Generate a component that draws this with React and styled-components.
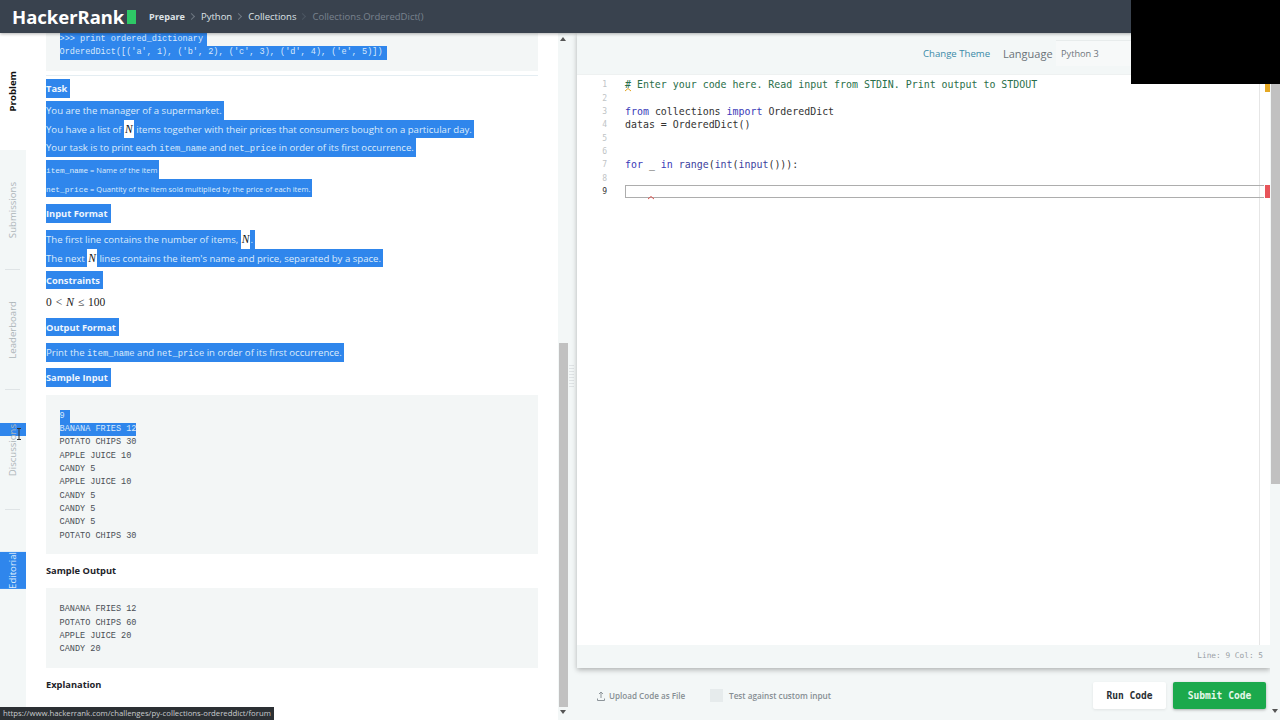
import React from 'react';
import styled, { createGlobalStyle } from 'styled-components';

const Global = createGlobalStyle`
  html, body {
    margin: 0;
    height: 720px;
    overflow: hidden;
    background: #fff;
    font-family: "Open Sans", "Liberation Sans", sans-serif;
    color: #39424e;
  }
  * { box-sizing: border-box; }
`;

const Page = styled.div`
  position: relative;
  width: 1280px;
  height: 720px;
  overflow: hidden;
`;

const Header = styled.header`
  position: relative;
  z-index: 3;
  height: 33px;
  display: flex;
  align-items: center;
  padding-left: 12px;
  background: #39424e;
  box-shadow: 0 1px 3px rgba(0, 0, 0, .3);
`;

const Logo = styled.div`
  display: flex;
  align-items: center;
  width: 137px;
  color: #fff;
  font-family: "Noto Sans", sans-serif;
  font-size: 18.5px;
  font-weight: 700;
`;

const LogoMark = styled.span`
  width: 9px;
  height: 14px;
  margin-left: 3px;
  background: #2ec866;
`;

const Crumb = styled.span`
  font-size: ${p => p.$bold ? 9.1 : 9.5}px;
  color: ${p => p.$dim ? '#79838e' : '#dfe3e6'};
  font-weight: ${p => p.$bold ? 700 : 400};
`;

const CrumbSep = styled.span`
  width: 5px;
  height: 5px;
  margin: 0 7px 0 4px;
  border-top: 1px solid ${p => p.$dim ? '#4c5662' : '#6d7680'};
  border-right: 1px solid ${p => p.$dim ? '#4c5662' : '#6d7680'};
  transform: rotate(45deg);
`;

const Main = styled.div`
  display: flex;
  height: 687px;
`;

const Rail = styled.nav`
  flex: 0 0 26px;
  background: #f3f7f7;
  box-shadow: 1px 0 1px rgba(0, 0, 0, .04);
`;

const Tab = styled.div`
  position: relative;
  height: ${p => p.$first ? 117 : 120}px;
  display: flex;
  align-items: center;
  justify-content: center;
  background: ${p => p.$first ? '#fff' : 'transparent'};
  &::after {
    content: ${p => p.$first || p.$last ? 'none' : '""'};
    position: absolute;
    left: 5px;
    right: 6px;
    bottom: 0;
    height: 1px;
    background: #dfe4e6;
  }
`;

const TabLabel = styled.span`
  position: relative;
  z-index: 1;
  width: 26px;
  text-align: center;
  writing-mode: vertical-rl;
  transform: rotate(180deg);
  font-size: 9.6px;
  line-height: 26px;
  font-weight: ${p => p.$active ? 700 : 400};
  color: ${p => p.$active ? '#111' : p.$selected ? '#dcebfb' : '#aeb6ba'};
  background: ${p => p.$selected ? '#2f86ec' : 'transparent'};
`;

const TabSelection = styled.span`
  position: absolute;
  top: 33px;
  left: 0;
  width: 26px;
  height: 13px;
  background: #2f86ec;
`;

const Problem = styled.section`
  flex: 0 0 532px;
  padding: 0 20px;
  overflow: hidden;
  background: #fff;
`;

const Block = styled.div`
  margin-bottom: ${p => p.$after || 0}px;
  padding: ${p => p.$cut ? 0 : 15}px 13.5px 11px;
  background: #f3f6f6;
`;

const CodeLine = styled.div`
  width: fit-content;
  height: 13.33px;
  min-width: ${p => p.$selected ? 10 : 0}px;
  padding-right: ${p => p.$pad || 0}px;
  font-family: "Liberation Mono", monospace;
  font-size: 8.55px;
  line-height: 13.33px;
  white-space: pre;
  color: ${p => p.$selected ? '#d8e8fb' : '#4a4f55'};
  background: ${p => p.$selected ? '#2f86ec' : 'transparent'};
`;

const Divider = styled.hr`
  height: 1px;
  margin: 4.33px 0 3.33px;
  border: 0;
  background: #e4edf2;
`;

const Heading = styled.h3`
  width: fit-content;
  height: 18.67px;
  margin: 0 0 ${p => p.$after || 0}px;
  padding-right: ${p => p.$selected ? 3 : 0}px;
  font-size: 9.3px;
  line-height: 20.5px;
  font-weight: 700;
  color: ${p => p.$selected ? '#eef5fd' : '#1d232a'};
  background: ${p => p.$selected ? '#2f86ec' : 'transparent'};
`;

const Para = styled.p`
  width: fit-content;
  height: 18.67px;
  margin: 0 0 ${p => p.$after || 0}px;
  padding-right: 2px;
  font-size: ${p => p.$small ? 7.5 : 9.6}px;
  line-height: 20.5px;
  white-space: nowrap;
  color: #dcebfb;
  background: #2f86ec;
`;

const Mono = styled.code`
  font-family: "Liberation Mono", monospace;
  font-size: ${p => p.$small ? 7.8 : 8.8}px;
  line-height: 1;
`;

const MathVar = styled.span`
  display: inline-block;
  height: 18.67px;
  padding: 0 1px;
  vertical-align: top;
  font-family: "Liberation Serif", serif;
  font-size: 11.5px;
  line-height: 18.67px;
  font-style: italic;
  color: #111;
  background: #fff;
`;

const MathLine = styled.p`
  height: 18.67px;
  margin: 0 0 6.67px;
  font-family: "Liberation Serif", serif;
  font-size: 11.5px;
  line-height: 18.67px;
  word-spacing: 1px;
  color: #222;
  em { font-size: 12px; }
`;

const ScrollTrack = styled.div`
  flex: 0 0 10px;
  display: flex;
  flex-direction: column;
  align-items: center;
  background: #f3f7f7;
`;

const Arrow = styled.span`
  flex: none;
  width: 0;
  height: 0;
  margin-top: ${p => p.$top || 0}px;
  border-left: 3px solid transparent;
  border-right: 3px solid transparent;
  ${p => p.$down ? 'border-top: 4px solid #555;' : 'border-bottom: 4px solid #555;'}
`;

const Thumb = styled.div`
  flex: none;
  width: 9px;
  height: ${p => p.$height}px;
  margin-top: ${p => p.$top}px;
  background: #c1c1c1;
`;

const Splitter = styled.div`
  flex: 0 0 9px;
  display: flex;
  align-items: center;
  justify-content: center;
  padding: 0 3px 0 1px;
  background: #f3f7f7;
`;

const Grip = styled.span`
  width: 5px;
  height: 22px;
  margin-top: -2px;
  background: repeating-linear-gradient(#dfe3e5 0 1px, transparent 1px 3px);
`;

const Workspace = styled.div`
  flex: 0 0 693px;
  display: flex;
  flex-direction: column;
  background: #f3f7f7;
`;

const Panel = styled.div`
  height: 635px;
  display: flex;
  flex-direction: column;
  background: #f3f7f7;
  box-shadow: 0 2px 5px rgba(0, 0, 0, .28);
`;

const PanelHead = styled.div`
  flex: 0 0 41px;
  display: flex;
  align-items: center;
  padding: 0 0 1px 346px;
`;

const ThemeLink = styled.a`
  width: 80px;
  font-size: 9.6px;
  color: #3a8aa8;
`;

const LangLabel = styled.span`
  width: 53px;
  font-size: 11px;
  color: #6b7379;
`;

const LangSelect = styled.div`
  width: 90px;
  height: 26px;
  display: flex;
  align-items: center;
  padding-left: 5px;
  font-size: 9.2px;
  color: #6f777d;
  background: #f7f9f9;
  border-top: 1px solid #e8ecec;
`;

const Editor = styled.div`
  flex: 0 0 571px;
  display: flex;
  background: #fff;
  border-top: 1px solid #eef1f1;
`;

const Lines = styled.div`
  flex: 1;
  padding-top: 3.4px;
`;

const Line = styled.div`
  display: flex;
  height: 13.33px;
  font-family: "DejaVu Sans Mono", monospace;
  font-size: 9.94px;
  line-height: 13.33px;
  white-space: pre;
`;

const LineNo = styled.span`
  flex: 0 0 30px;
  margin-right: 18px;
  text-align: right;
  font-size: 8px;
  color: ${p => p.$active ? '#333' : '#c0c4c6'};
`;

const CodeText = styled.span`
  position: relative;
  color: #333;
`;

const Kw = styled.span`
  color: ${p => p.$builtin ? '#3c3f9e' : '#3a3ab8'};
`;

const Comment = styled.span`
  color: #2a6f4a;
`;

const Squiggle = styled.svg`
  position: absolute;
  left: ${p => p.$left}px;
  top: ${p => p.$top}px;
  overflow: visible;
`;

const ActiveBox = styled.span`
  position: relative;
  z-index: 1;
  flex: 1;
  height: 13.33px;
  margin-right: -5px;
  border: 1px solid #adadad;
  border-right: 0;
`;

const Ruler = styled.div`
  position: relative;
  flex: 0 0 11px;
  border-left: 1px solid #e6e6e6;
`;

const RulerMark = styled.span`
  position: absolute;
  right: 0;
  top: ${p => p.$top}px;
  width: 5px;
  height: ${p => p.$height}px;
  background: ${p => p.$color};
`;

const StatusRow = styled.div`
  flex: 0 0 23px;
  display: flex;
  align-items: center;
  justify-content: flex-end;
  padding: 0 7px 2px 0;
  font-family: "DejaVu Sans Mono", monospace;
  font-size: 7.8px;
  color: #9aa1a5;
`;

const Toolbar = styled.div`
  flex: 1;
  display: flex;
  align-items: center;
  padding: 3px 4px 0 20px;
`;

const UploadLink = styled.a`
  display: flex;
  align-items: center;
  gap: 4px;
  width: 113px;
  font-size: 8.1px;
  font-weight: 600;
  color: #868e93;
`;

const Check = styled.span`
  flex: none;
  width: 13px;
  height: 13px;
  margin-right: 6px;
  background: #e6ebec;
`;

const CheckLabel = styled.span`
  font-size: 8.2px;
  font-weight: 600;
  color: #868e93;
`;

const Button = styled.button`
  width: ${p => p.$primary ? 93 : 73}px;
  height: 27px;
  margin-left: ${p => p.$primary ? '7px' : 'auto'};
  padding: 0;
  border: 0;
  border-radius: 2px;
  font-family: "DejaVu Sans Mono", monospace;
  font-size: 9.6px;
  font-weight: 700;
  color: ${p => p.$primary ? '#e4f7ea' : '#2a2f35'};
  background: ${p => p.$primary ? '#1ba94c' : '#fff'};
  box-shadow: 0 1px 3px rgba(0, 0, 0, ${p => p.$primary ? .3 : .08});
`;

const BlackBox = styled.div`
  position: absolute;
  z-index: 5;
  top: 0;
  right: 0;
  width: 149px;
  height: 84px;
  background: #000;
`;

const StatusTip = styled.div`
  position: absolute;
  z-index: 5;
  left: 0;
  bottom: 0;
  width: 274px;
  height: 13px;
  padding-left: 3px;
  font-size: 7.75px;
  line-height: 13px;
  white-space: nowrap;
  color: #c9ccce;
  background: #2c3034;
`;

const Cursor = styled.svg`
  position: absolute;
  z-index: 5;
  left: 16px;
  top: 428px;
`;

const intro = ['>>> print ordered_dictionary', "OrderedDict([('a', 1), ('b', 2), ('c', 3), ('d', 4), ('e', 5)])"];
const sampleIn = ['POTATO CHIPS 30', 'APPLE JUICE 10', 'CANDY 5', 'APPLE JUICE 10', 'CANDY 5', 'CANDY 5', 'CANDY 5', 'POTATO CHIPS 30'];
const sampleOut = ['BANANA FRIES 12', 'POTATO CHIPS 60', 'APPLE JUICE 20', 'CANDY 20'];

function Caret({ left, top, color }) {
  return (
    <Squiggle $left={left} $top={top} width="6" height="3" viewBox="0 0 6 3" fill="none" stroke={color} strokeWidth="1">
      <path d="M0 3l3-2.5L6 3" />
    </Squiggle>
  );
}

export default function App() {
  return (
    <Page>
      <Global />
      <Header>
        <Logo>HackerRank<LogoMark /></Logo>
        <Crumb $bold>Prepare</Crumb>
        <CrumbSep />
        <Crumb>Python</Crumb>
        <CrumbSep />
        <Crumb>Collections</Crumb>
        <CrumbSep $dim />
        <Crumb $dim>Collections.OrderedDict()</Crumb>
      </Header>
      <Main>
        <Rail>
          <Tab $first><TabLabel $active>Problem</TabLabel></Tab>
          <Tab><TabLabel>Submissions</TabLabel></Tab>
          <Tab><TabLabel>Leaderboard</TabLabel></Tab>
          <Tab><TabSelection /><TabLabel>Discussions</TabLabel></Tab>
          <Tab $last><TabLabel $selected>Editorial</TabLabel></Tab>
        </Rail>
        <Problem>
          <Block $cut>
            <CodeLine $selected $pad={4}>{intro[0]}</CodeLine>
            <CodeLine $selected $pad={4}>{intro[1]}</CodeLine>
          </Block>
          <Divider />
          <Heading $selected $after={3}>Task</Heading>
          <Para>You are the manager of a supermarket.</Para>
          <Para>You have a list of <MathVar>N</MathVar> items together with their prices that consumers bought on a particular day.</Para>
          <Para $after={3}>Your task is to print each <Mono>item_name</Mono> and <Mono>net_price</Mono> in order of its first occurrence.</Para>
          <Para $small><Mono $small>item_name</Mono> = Name of the item</Para>
          <Para $small $after={6.67}><Mono $small>net_price</Mono> = Quantity of the item sold multiplied by the price of each item.</Para>
          <Heading $selected $after={7.33}>Input Format</Heading>
          <Para>The first line contains the number of items, <MathVar>N</MathVar>.</Para>
          <Para $after={3.33}>The next <MathVar>N</MathVar> lines contains the item's name and price, separated by a space.</Para>
          <Heading $selected $after={3.33}>Constraints</Heading>
          <MathLine>0 &lt; <em>N</em> ≤ 100</MathLine>
          <Heading $selected $after={6.67}>Output Format</Heading>
          <Para $after={6.67}>Print the <Mono>item_name</Mono> and <Mono>net_price</Mono> in order of its first occurrence.</Para>
          <Heading $selected $after={7.67}>Sample Input</Heading>
          <Block $after={7.33}>
            <CodeLine $selected>9</CodeLine>
            <CodeLine $selected>BANANA FRIES 12</CodeLine>
            {sampleIn.map((l, i) => <CodeLine key={i}>{l}</CodeLine>)}
          </Block>
          <Heading $after={8.33}>Sample Output</Heading>
          <Block $after={7}>
            {sampleOut.map((l, i) => <CodeLine key={i}>{l}</CodeLine>)}
          </Block>
          <Heading>Explanation</Heading>
        </Problem>
        <ScrollTrack>
          <Arrow $top={4} />
          <Thumb $top={302} $height={364} />
          <Arrow $down $top={3} />
        </ScrollTrack>
        <Splitter><Grip /></Splitter>
        <Workspace>
          <Panel>
            <PanelHead>
              <ThemeLink>Change Theme</ThemeLink>
              <LangLabel>Language</LangLabel>
              <LangSelect>Python 3</LangSelect>
            </PanelHead>
            <Editor>
              <Lines>
                <Line>
                  <LineNo>1</LineNo>
                  <CodeText><Comment># Enter your code here. Read input from STDIN. Print output to STDOUT</Comment><Caret left={0} top={10} color="#e2a21c" /></CodeText>
                </Line>
                <Line><LineNo>2</LineNo></Line>
                <Line><LineNo>3</LineNo><CodeText><Kw>from</Kw> collections <Kw>import</Kw> OrderedDict</CodeText></Line>
                <Line><LineNo>4</LineNo><CodeText>datas = OrderedDict()</CodeText></Line>
                <Line><LineNo>5</LineNo></Line>
                <Line><LineNo>6</LineNo></Line>
                <Line><LineNo>7</LineNo><CodeText><Kw>for</Kw> _ <Kw>in</Kw> <Kw $builtin>range</Kw>(<Kw $builtin>int</Kw>(<Kw $builtin>input</Kw>())):</CodeText></Line>
                <Line><LineNo>8</LineNo></Line>
                <Line>
                  <LineNo $active>9</LineNo>
                  <ActiveBox><Caret left={22} top={10} color="#d9534f" /></ActiveBox>
                </Line>
              </Lines>
              <Ruler>
                <RulerMark $top={9} $height={8} $color="#e5a823" />
                <RulerMark $top={110} $height={13} $color="#e8545a" />
              </Ruler>
            </Editor>
            <StatusRow>Line: 9 Col: 5</StatusRow>
          </Panel>
          <Toolbar>
            <UploadLink>
              <svg width="8" height="10" viewBox="0 0 8 10" fill="none" stroke="#8d959a" strokeWidth="1">
                <path d="M4 7V1M2 3l2-2 2 2M.5 7.5v2h7v-2" />
              </svg>
              Upload Code as File
            </UploadLink>
            <Check />
            <CheckLabel>Test against custom input</CheckLabel>
            <Button>Run Code</Button>
            <Button $primary>Submit Code</Button>
          </Toolbar>
        </Workspace>
        <ScrollTrack>
          <Thumb $top={0} $height={451} />
          <Arrow $down $top={225} />
        </ScrollTrack>
      </Main>
      <BlackBox />
      <Cursor width="6" height="12" viewBox="0 0 6 12" fill="none" stroke="#333" strokeWidth="1">
        <path d="M1 .5h4M3 .5v11M1 11.5h4" />
      </Cursor>
      <StatusTip>https://www.hackerrank.com/challenges/py-collections-ordereddict/forum</StatusTip>
    </Page>
  );
}
